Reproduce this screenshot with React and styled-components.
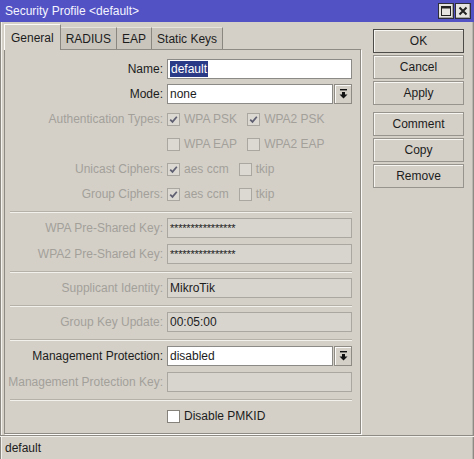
import React from "react";
import styled, { createGlobalStyle } from "styled-components";

const FONT = `"Liberation Sans", Arial, Helvetica, sans-serif`;
const FACE = "#d4d0c8";
const TEXT = "#1c1c1c";
const DIM = "#a3a09a";
const EDGE = "#8e8b85";

const GlobalStyle = createGlobalStyle`
  html, body { margin: 0; padding: 0; background: ${FACE}; }
  body { font-family: ${FONT}; font-size: 12px; color: ${TEXT}; }
  * { box-sizing: border-box; }
`;

const Window = styled.div`
  width: 474px;
  height: 459px;
  display: flex;
  flex-direction: column;
  background: ${FACE};
  overflow: hidden;
  box-shadow: inset 1px 0 #8d8a84, inset -1px 0 #8d8a84, inset 2px 0 #f4f2ee,
    inset -2px 0 #b9b6b0;
`;

const TitleBar = styled.div`
  height: 22px;
  flex-shrink: 0;
  display: flex;
  align-items: center;
  justify-content: space-between;
  padding: 0 3px 0 5px;
  background: #5252c4;
  color: #f4f4ff;
  font-size: 12px;
`;

const TitleButtons = styled.div`
  display: flex;
  gap: 1px;
`;

const TitleButton = styled.div`
  width: 16px;
  height: 16px;
  display: flex;
  align-items: center;
  justify-content: center;
  background: #e6e4e0;
  border: 1px solid #2e2e3a;
  box-shadow: inset -1px -1px #a8a6a2;
`;

const Body = styled.div`
  flex: 1;
  min-height: 0;
  display: flex;
`;

const Main = styled.div`
  display: flex;
  flex-direction: column;
  padding: 2px 0 0 4px;
`;

const TabStrip = styled.div`
  height: 25px;
  display: flex;
  align-items: flex-end;
`;

const Tab = styled.div`
  position: relative;
  z-index: ${(p) => (p.$active ? 2 : 1)};
  height: ${(p) => (p.$active ? 26 : 22)}px;
  margin-bottom: ${(p) => (p.$active ? -1 : 0)}px;
  padding: 0 ${(p) => (p.$active ? 6 : 5)}px;
  display: flex;
  align-items: center;
  background: ${(p) => (p.$active ? FACE : "#c9c5bd")};
  border-top: 1px solid ${(p) => (p.$active ? "#fbfaf8" : "#e6e3dd")};
  border-left: ${(p) => (p.$active ? "1px solid #fbfaf8" : "none")};
  border-right: 1px solid #8a8781;
  color: ${TEXT};
  white-space: nowrap;
`;

const Panel = styled.div`
  width: 357px;
  display: flex;
  flex-direction: column;
  padding: 9px 8px 7px 0;
  border: 1px solid ${EDGE};
  box-shadow: 1px 1px 0 #fbfaf8;
`;

const Section = styled.div`
  display: flex;
  flex-direction: column;
  gap: ${(p) => p.$gap ?? 6}px;
`;

const Separator = styled.div`
  height: 2px;
  margin: 7px 0 5px 5px;
  border-top: 1px solid #b5b1a9;
  border-bottom: 1px solid #f3f1ec;
`;

const Row = styled.div`
  height: 20px;
  display: flex;
  align-items: center;
`;

const Label = styled.div`
  width: 158px;
  margin-right: 4px;
  flex-shrink: 0;
  text-align: right;
  white-space: nowrap;
  color: ${(p) => (p.$disabled ? DIM : TEXT)};
`;

const Field = styled.div`
  width: ${(p) => (p.$grow ? "auto" : "185px")};
  flex: ${(p) => (p.$grow ? 1 : "none")};
  height: 20px;
  display: flex;
  align-items: center;
  padding: 0 2px;
  border: 1px solid ${(p) => (p.$disabled ? "#aaa7a1" : "#8c8a86")};
  background: ${(p) => (p.$disabled ? "#d8d5cf" : "#ffffff")};
  color: ${TEXT};
  white-space: nowrap;
  overflow: hidden;
`;

const Masked = styled.span`
  font-size: 11px;
  letter-spacing: -0.2px;
`;

const Highlight = styled.span`
  background: #2b3a86;
  color: #ffffff;
  padding: 0 1px;
  line-height: 16px;
`;

const Select = styled.div`
  width: 185px;
  display: flex;
  gap: 1px;
`;

const DropButton = styled.div`
  width: 18px;
  height: 20px;
  flex-shrink: 0;
  display: flex;
  align-items: center;
  justify-content: center;
  border: 1px solid ${EDGE};
  background: ${FACE};
  box-shadow: inset 1px 1px #fbfaf8;
`;

const CheckGroup = styled.div`
  display: flex;
  align-items: center;
  gap: 10px;
`;

const CheckItem = styled.div`
  display: flex;
  align-items: center;
  gap: 4px;
  color: ${(p) => (p.$disabled ? DIM : TEXT)};
  white-space: nowrap;
`;

const Box = styled.div`
  width: 13px;
  height: 13px;
  display: flex;
  align-items: center;
  justify-content: center;
  border: 1px solid ${(p) => (p.$disabled ? "#aaa7a1" : "#85827c")};
  background: ${(p) => (p.$disabled ? "#dcd9d3" : "#ffffff")};
`;

const Actions = styled.div`
  width: 91px;
  margin: 7px 0 0 12px;
  display: flex;
  flex-direction: column;
  gap: 7px;
`;

const ButtonGroup = styled.div`
  display: flex;
  flex-direction: column;
  gap: 2px;
`;

const ActionButton = styled.div`
  height: 24px;
  display: flex;
  align-items: center;
  justify-content: center;
  background: ${FACE};
  border: 1px solid ${(p) => (p.$primary ? "#4e4c48" : "#97948e")};
  box-shadow: inset 1px 1px #f7f6f3;
  color: ${TEXT};
`;

const StatusBar = styled.div`
  height: 24px;
  flex-shrink: 0;
  display: flex;
  align-items: center;
  padding-left: 5px;
  border-top: 1px solid ${EDGE};
  box-shadow: inset 0 1px #f3f1ec;
  color: ${TEXT};
`;

const MaximizeIcon = () => (
  <svg width="10" height="10" viewBox="0 0 10 10">
    <rect x="0.5" y="0.5" width="9" height="9" fill="none" stroke="#222" />
    <rect x="0" y="0" width="10" height="2.5" fill="#222" />
  </svg>
);

const CloseIcon = () => (
  <svg width="10" height="10" viewBox="0 0 10 10">
    <path d="M1.5 1.5 L8.5 8.5 M8.5 1.5 L1.5 8.5" stroke="#222" strokeWidth="2" />
  </svg>
);

const DropIcon = () => (
  <svg width="9" height="10" viewBox="0 0 9 10">
    <rect x="1" y="0" width="7" height="1.4" fill="#111" />
    <polygon points="3,3 6,3 6,5.5 8.5,5.5 4.5,9.6 0.5,5.5 3,5.5" fill="#111" />
  </svg>
);

const CheckMark = ({ color }) => (
  <svg width="9" height="9" viewBox="0 0 9 9">
    <polyline
      points="1.2,4.6 3.5,6.9 7.8,1.8"
      fill="none"
      stroke={color}
      strokeWidth="1.7"
    />
  </svg>
);

const Check = ({ label, checked, disabled }) => (
  <CheckItem $disabled={disabled}>
    <Box $disabled={disabled}>
      {checked && <CheckMark color={disabled ? "#5f5f72" : "#1c1c1c"} />}
    </Box>
    {label}
  </CheckItem>
);

const tabs = ["General", "RADIUS", "EAP", "Static Keys"];
const mask = "****************";

export default function App() {
  return (
    <>
      <GlobalStyle />
      <Window>
        <TitleBar>
          <span>Security Profile &lt;default&gt;</span>
          <TitleButtons>
            <TitleButton>
              <MaximizeIcon />
            </TitleButton>
            <TitleButton>
              <CloseIcon />
            </TitleButton>
          </TitleButtons>
        </TitleBar>

        <Body>
          <Main>
            <TabStrip>
              {tabs.map((t, i) => (
                <Tab key={t} $active={i === 0}>
                  {t}
                </Tab>
              ))}
            </TabStrip>

            <Panel>
              <Section $gap={5}>
                <Row>
                  <Label>Name:</Label>
                  <Field>
                    <Highlight>default</Highlight>
                  </Field>
                </Row>
                <Row>
                  <Label>Mode:</Label>
                  <Select>
                    <Field $grow>none</Field>
                    <DropButton>
                      <DropIcon />
                    </DropButton>
                  </Select>
                </Row>
                <Row>
                  <Label $disabled>Authentication Types:</Label>
                  <CheckGroup>
                    <Check label="WPA PSK" checked disabled />
                    <Check label="WPA2 PSK" checked disabled />
                  </CheckGroup>
                </Row>
                <Row>
                  <Label />
                  <CheckGroup>
                    <Check label="WPA EAP" disabled />
                    <Check label="WPA2 EAP" disabled />
                  </CheckGroup>
                </Row>
                <Row>
                  <Label $disabled>Unicast Ciphers:</Label>
                  <CheckGroup>
                    <Check label="aes ccm" checked disabled />
                    <Check label="tkip" disabled />
                  </CheckGroup>
                </Row>
                <Row>
                  <Label $disabled>Group Ciphers:</Label>
                  <CheckGroup>
                    <Check label="aes ccm" checked disabled />
                    <Check label="tkip" disabled />
                  </CheckGroup>
                </Row>
              </Section>

              <Separator />

              <Section>
                <Row>
                  <Label $disabled>WPA Pre-Shared Key:</Label>
                  <Field $disabled>
                    <Masked>{mask}</Masked>
                  </Field>
                </Row>
                <Row>
                  <Label $disabled>WPA2 Pre-Shared Key:</Label>
                  <Field $disabled>
                    <Masked>{mask}</Masked>
                  </Field>
                </Row>
              </Section>

              <Separator />

              <Section>
                <Row>
                  <Label $disabled>Supplicant Identity:</Label>
                  <Field $disabled>MikroTik</Field>
                </Row>
              </Section>

              <Separator />

              <Section>
                <Row>
                  <Label $disabled>Group Key Update:</Label>
                  <Field $disabled>00:05:00</Field>
                </Row>
              </Section>

              <Separator />

              <Section>
                <Row>
                  <Label>Management Protection:</Label>
                  <Select>
                    <Field $grow>disabled</Field>
                    <DropButton>
                      <DropIcon />
                    </DropButton>
                  </Select>
                </Row>
                <Row>
                  <Label $disabled>Management Protection Key:</Label>
                  <Field $disabled />
                </Row>
              </Section>

              <Separator />

              <Section>
                <Row>
                  <Label />
                  <Check label="Disable PMKID" />
                </Row>
              </Section>
            </Panel>
          </Main>

          <Actions>
            <ButtonGroup>
              <ActionButton $primary>OK</ActionButton>
              <ActionButton>Cancel</ActionButton>
              <ActionButton>Apply</ActionButton>
            </ButtonGroup>
            <ButtonGroup>
              <ActionButton>Comment</ActionButton>
              <ActionButton>Copy</ActionButton>
              <ActionButton>Remove</ActionButton>
            </ButtonGroup>
          </Actions>
        </Body>

        <StatusBar>default</StatusBar>
      </Window>
    </>
  );
}
